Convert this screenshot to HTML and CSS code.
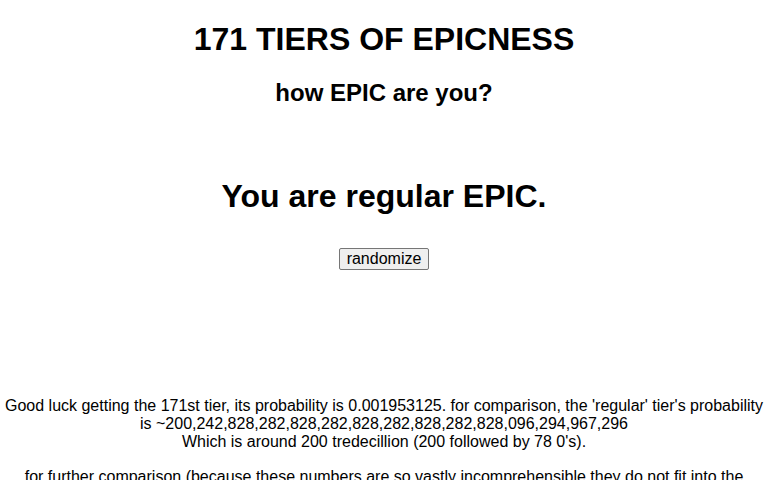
FILE: index.html
```html
<!DOCTYPE html>
<html>
<head>
<meta charset="utf-8">
<title>171 TIERS OF EPICNESS</title>
<link rel="stylesheet" href="styles.css">
</head>
<body class="page">
<h1 class="title">171 TIERS OF EPICNESS</h1>
<h2 class="subtitle">how EPIC are you?</h2>
<h1 class="result">You are regular EPIC.</h1>
<div class="actions"><button class="btn" type="button">randomize</button></div>
<p class="info">Good luck getting the 171st tier, its probability is 0.001953125. for comparison, the 'regular' tier's probability is ~200,242,828,282,828,282,828,282,828,282,828,096,294,967,296<br>Which is around 200 tredecillion (200 followed by 78 0's).</p>
<p class="info more">for further comparison (because these numbers are so vastly incomprehensible they do not fit into the human brain), there are only about 7,500,000,000,000,000,000 grains of sand on Earth.</p>
</body>
</html>
```
FILE: styles.css
```css
html, body {
  background: #ffffff;
}
.page {
  margin: 0;
  padding: 0 4px;
  font-family: "Liberation Sans", Arial, sans-serif;
  color: #000000;
  text-align: center;
}
.title {
  font-size: 32px;
  font-weight: bold;
  margin: 21px 0;
}
.subtitle {
  font-size: 24px;
  font-weight: bold;
  margin: 20px 0;
}
.result {
  font-size: 32px;
  font-weight: bold;
  margin: 71px 0 33px;
}
.actions {
  margin: 0;
}
.btn {
  font-family: "Liberation Sans", Arial, sans-serif;
  font-size: 16px;
  padding: 1px 7px;
  color: #000;
  background: #efefef;
  border: 1px solid #767676;
  border-radius: 2px;
}
.info {
  font-size: 16px;
  margin: 16px 0;
}
.actions + .info {
  margin-top: 127px;
}
.info.more {
  margin-top: 17px;
}
```
